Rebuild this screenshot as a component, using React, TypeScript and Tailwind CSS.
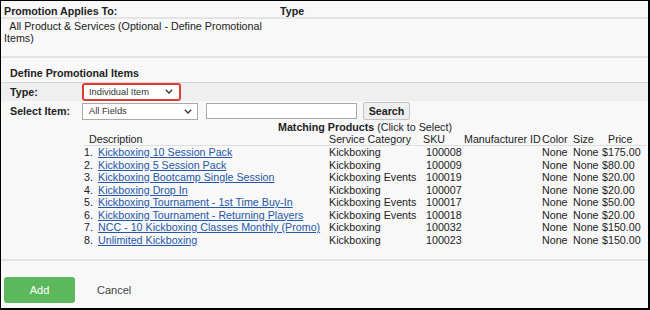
import React from 'react';

interface Product {
  name: string;
  category: string;
  sku: string;
  price: string;
}

const products: Product[] = [
  { name: 'Kickboxing 10 Session Pack', category: 'Kickboxing', sku: '100008', price: '$175.00' },
  { name: 'Kickboxing 5 Session Pack', category: 'Kickboxing', sku: '100009', price: '$80.00' },
  { name: 'Kickboxing Bootcamp Single Session', category: 'Kickboxing Events', sku: '100019', price: '$20.00' },
  { name: 'Kickboxing Drop In', category: 'Kickboxing', sku: '100007', price: '$20.00' },
  { name: 'Kickboxing Tournament - 1st Time Buy-In', category: 'Kickboxing Events', sku: '100017', price: '$50.00' },
  { name: 'Kickboxing Tournament - Returning Players', category: 'Kickboxing Events', sku: '100018', price: '$20.00' },
  { name: 'NCC - 10 Kickboxing Classes Monthly (Promo)', category: 'Kickboxing', sku: '100032', price: '$150.00' },
  { name: 'Unlimited Kickboxing', category: 'Kickboxing', sku: '100023', price: '$150.00' },
];

function Chevron() {
  return (
    <svg width="8" height="5" viewBox="0 0 8 5" className="shrink-0">
      <path d="M0.8 0.8 L4 4 L7.2 0.8" fill="none" stroke="#333" strokeWidth="1.3" />
    </svg>
  );
}

const cols = 'grid grid-cols-[245px_94px_41px_78px_31px_29px_1fr]';

export default function App() {
  return (
    <div
      className="w-[650px] h-[310px] overflow-hidden bg-[#f8f8f8] border-black border-t border-l border-r-2 border-b-2 text-[10.7px] leading-[12px] text-[#222]"
      style={{ fontFamily: '"Liberation Sans", Arial, sans-serif' }}
    >
      {/* Promotion applies to */}
      <div className="flex h-[18px] pt-[4px] font-bold border-b-2 border-[#e4e4e4]">
        <div className="w-[279px] pl-[3px]">Promotion Applies To:</div>
        <div>Type</div>
      </div>
      <div className="h-[39px] pt-[1px] border-b-2 border-[#e4e4e4]">
        <div className="w-[272px] pl-[3px]">&nbsp; All Product &amp; Services (Optional - Define Promotional Items)</div>
      </div>

      {/* Define promotional items */}
      <div className="h-[25px] pt-[9px] pl-[9px] font-bold border-b border-[#d6d6d6]">Define Promotional Items</div>

      <div className="flex items-center h-[18px] bg-[#efefef]">
        <div className="w-[81px] pl-[9px] font-bold">Type:</div>
        <div className="flex items-center justify-between w-[99px] h-[18px] -mt-[1px] pl-[5px] pr-[6px] bg-white border-2 border-[#e53935] rounded-[3px] text-[9.3px] text-[#333]">
          <span>Individual Item</span>
          <Chevron />
        </div>
      </div>

      <div className="flex items-center h-[20px]">
        <div className="w-[81px] pl-[9px] font-bold">Select Item:</div>
        <div className="flex items-center justify-between w-[116px] h-[17px] pl-[6px] pr-[5px] bg-white border border-[#a9a9a9] text-[9.3px] text-[#333]">
          <span>All Fields</span>
          <Chevron />
        </div>
        <div className="ml-[8px] w-[151px] h-[16px] bg-white border border-[#a9a9a9]" />
        <div className="ml-[6px] flex items-center justify-center w-[47px] h-[18px] bg-[#efefef] border border-[#c4c4c4] rounded-[2px] font-bold">
          Search
        </div>
      </div>

      {/* Matching products */}
      <div className="pl-[83px] pr-[2px]">
        <div className="h-[12px] text-center">
          <span className="font-bold">Matching Products</span> (Click to Select)
        </div>
        <div className={`${cols} h-[13px] border-b border-[#dedede] whitespace-nowrap`}>
          <div className="pl-[5px]">Description</div>
          <div>Service Category</div>
          <div>SKU</div>
          <div>Manufacturer ID</div>
          <div>Color</div>
          <div>Size</div>
          <div className="pl-[6px]">Price</div>
        </div>
        {products.map((p, i) => (
          <div key={p.sku} className={`${cols} h-[12.5px] leading-[12.5px] whitespace-nowrap`}>
            <div className="flex">
              <span className="w-[14px]">{i + 1}.</span>
              <a className="text-[#2557a7] underline">{p.name}</a>
            </div>
            <div>{p.category}</div>
            <div className="pl-[3px]">{p.sku}</div>
            <div />
            <div>None</div>
            <div>None</div>
            <div>{p.price}</div>
          </div>
        ))}
      </div>

      <div className="h-[15px] border-b-2 border-[#e4e4e4]" />

      {/* Actions */}
      <div className="flex items-center pt-[16px] pl-[3px] text-[11px]">
        <button className="w-[71px] h-[26px] bg-[#5cb85c] rounded-[3px] text-white">Add</button>
        <span className="ml-[22px] text-[#444]">Cancel</span>
      </div>
    </div>
  );
}
